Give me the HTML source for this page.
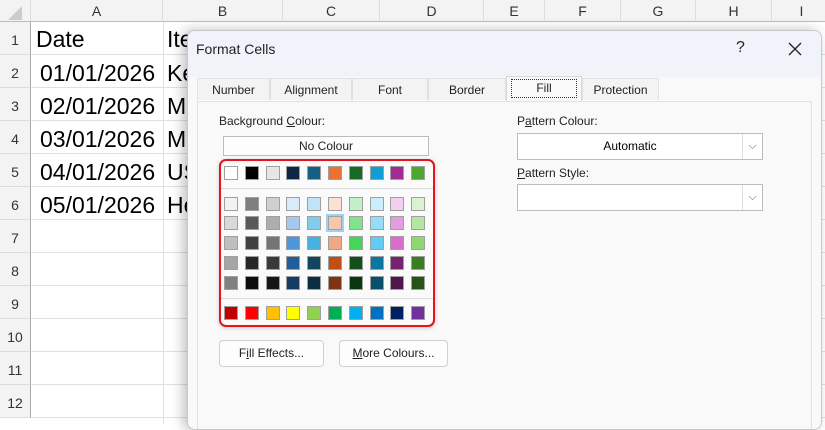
<!DOCTYPE html><html><head><style>
*{margin:0;padding:0;box-sizing:border-box}
body{width:825px;height:424px;overflow:hidden;background:#fff;font-family:"Liberation Sans",sans-serif;position:relative}
.a{position:absolute}
.ch{top:0;height:22px;background:#f3f3f3;border-bottom:1px solid #bbb;font-size:14px;color:#333;text-align:center;line-height:22px;border-right:1px solid #dcdcdc}
.rh{left:0;width:31px;height:33px;background:#f3f3f3;border-right:1px solid #aaa;border-bottom:1px solid #dcdcdc;font-size:14px;color:#333;text-align:center;line-height:36px}
.cell{font-size:23px;color:#000;line-height:33px}
.hl{left:31px;width:794px;height:1px;background:#e0e0e0}
.vl{top:22px;width:1px;height:402px;background:#e0e0e0}
.dlg{left:187px;top:30px;width:635px;height:400px;background:#f9f9f9;border:1px solid #c8c8c8;border-radius:8px;box-shadow:-4px 0 12px rgba(0,0,0,.25);overflow:hidden}
.t{font-size:12px;color:#222}
.tab{top:78px;height:22px;border:1px solid #e0e0e0;border-bottom:none;background:#f3f3f3;font-size:12px;text-align:center;line-height:22px;color:#222}
.sw{position:absolute;width:14px;height:14px;border:1px solid #a0a0a0}
.btn{background:#fdfdfd;border:1px solid #d0d0d0;border-radius:4px;font-size:12px;text-align:center;color:#222}
</style></head><body>
<div class="a ch" style="left:0;width:31px;background:#f3f3f3"></div>
<div class="a" style="left:8px;top:6px;width:0;height:0;border-left:14px solid transparent;border-bottom:14px solid #ccc"></div>
<div class="a ch" style="left:31px;width:132px">A</div>
<div class="a ch" style="left:163px;width:120px">B</div>
<div class="a ch" style="left:283px;width:97px">C</div>
<div class="a ch" style="left:380px;width:104px">D</div>
<div class="a ch" style="left:484px;width:61px">E</div>
<div class="a ch" style="left:545px;width:76px">F</div>
<div class="a ch" style="left:621px;width:75px">G</div>
<div class="a ch" style="left:696px;width:76px">H</div>
<div class="a ch" style="left:772px;width:60px">I</div>
<div class="a rh" style="top:22px">1</div><div class="a rh" style="top:55px">2</div><div class="a rh" style="top:88px">3</div><div class="a rh" style="top:121px">4</div><div class="a rh" style="top:154px">5</div><div class="a rh" style="top:187px">6</div><div class="a rh" style="top:220px">7</div><div class="a rh" style="top:253px">8</div><div class="a rh" style="top:286px">9</div><div class="a rh" style="top:319px">10</div><div class="a rh" style="top:352px">11</div><div class="a rh" style="top:385px">12</div>
<div class="a hl" style="top:54px"></div><div class="a hl" style="top:87px"></div><div class="a hl" style="top:120px"></div><div class="a hl" style="top:153px"></div><div class="a hl" style="top:186px"></div><div class="a hl" style="top:219px"></div><div class="a hl" style="top:252px"></div><div class="a hl" style="top:285px"></div><div class="a hl" style="top:318px"></div><div class="a hl" style="top:351px"></div><div class="a hl" style="top:384px"></div><div class="a hl" style="top:417px"></div>
<div class="a vl" style="left:163px"></div>
<div class="a cell" style="left:36px;top:23px">Date</div>
<div class="a cell" style="left:40px;top:57px">01/01/2026</div>
<div class="a cell" style="left:40px;top:90px">02/01/2026</div>
<div class="a cell" style="left:40px;top:123px">03/01/2026</div>
<div class="a cell" style="left:40px;top:156px">04/01/2026</div>
<div class="a cell" style="left:40px;top:189px">05/01/2026</div>
<div class="a cell" style="left:167px;top:23px">Item</div>
<div class="a cell" style="left:167px;top:57px">Ke</div>
<div class="a cell" style="left:167px;top:90px">Mo</div>
<div class="a cell" style="left:167px;top:123px">Mo</div>
<div class="a cell" style="left:167px;top:156px">US</div>
<div class="a cell" style="left:167px;top:189px">He</div>

<div class="a dlg">
<div class="a" style="left:0;top:0;width:635px;height:46px;background:#f0f4fa"></div>
<div class="a" style="left:8px;top:10px;font-size:14px;color:#222">Format Cells</div>
<div class="a" style="left:548px;top:8px;font-size:16px;color:#222">?</div>
<svg class="a" style="left:600px;top:11px" width="14" height="14" viewBox="0 0 14 14"><path d="M1 1L13 13M13 1L1 13" stroke="#222" stroke-width="1.3" fill="none"/></svg>
<div class="a" style="left:9px;top:70px;width:615px;height:340px;background:#f9f9f9;border:1px solid #e2e2e2"></div>
</div>
<div class="a tab" style="left:197px;width:73px">Number</div>
<div class="a tab" style="left:270px;width:82px">Alignment</div>
<div class="a tab" style="left:352px;width:76px">Font</div>
<div class="a tab" style="left:428px;width:78px">Border</div>
<div class="a tab" style="left:506px;top:76px;height:25px;width:76px;background:#f9f9f9;border-color:#d8d8d8"><div style="margin:2px 4px 0;border:1px dotted #333;height:19px;line-height:17px">Fill</div></div>
<div class="a tab" style="left:582px;width:77px">Protection</div>

<div class="a t" style="left:219px;top:114px">Background <u>C</u>olour:</div>
<div class="a" style="left:223px;top:136px;width:206px;height:20px;border:1px solid #bcbcbc;background:#fdfdfd;font-size:12px;text-align:center;line-height:18px;color:#222">No Colour</div>
<div class="a" style="left:219px;top:159px;width:216px;height:168px;border:2px solid #e8141b;border-radius:7px;background:#fafafa;box-shadow:0 1px 4px rgba(0,0,0,.2)"></div>
<div class="a" style="left:221px;top:188px;width:212px;height:1px;background:#dadada"></div>
<div class="a" style="left:221px;top:298px;width:212px;height:1px;background:#dadada"></div>
<div id="pal"></div>

<div class="a t" style="left:517px;top:114px">P<u>a</u>ttern Colour:</div>
<div class="a" style="left:517px;top:133px;width:246px;height:27px;border:1px solid #bcbcbc;background:#fff;font-size:12px;line-height:25px;text-align:center;padding-right:20px">Automatic</div>
<div class="a" style="left:742px;top:134px;width:20px;height:25px;border-left:1px solid #ddd;text-align:center;color:#666;font-size:11px;line-height:24px">⌵</div>
<div class="a t" style="left:517px;top:166px"><u>P</u>attern Style:</div>
<div class="a" style="left:517px;top:184px;width:246px;height:27px;border:1px solid #bcbcbc;background:#fff"></div>
<div class="a" style="left:742px;top:185px;width:20px;height:25px;border-left:1px solid #ddd;text-align:center;color:#666;font-size:11px;line-height:24px">⌵</div>

<div class="a btn" style="left:219px;top:340px;width:105px;height:27px;line-height:25px">F<u>i</u>ll Effects...</div>
<div class="a btn" style="left:339px;top:340px;width:109px;height:27px;line-height:25px"><u>M</u>ore Colours...</div>

<script>
var rows=[[173,["#fff","#000","#e7e6e6","#0e2841","#156082","#e97132","#196b24","#0f9ed5","#a02b93","#4ea72e"]],
[204,["#f2f2f2","#7f7f7f","#d0d0d0","#dceaf7","#c0e4f5","#fbe2d5","#c1f0c7","#caeefb","#f2cfee","#daf2d0"]],
[223,["#d9d9d9","#595959","#aeaeae","#a6c8ed","#83cbeb","#f7c7ac","#83e28e","#95dcf7","#e49edd","#b5e6a2"]],
[243,["#bfbfbf","#404040","#757575","#4e95d9","#44b3e1","#f1a983","#47d459","#61cbf3","#d86dcd","#8ed873"]],
[263,["#a6a6a6","#262626","#3a3a3a","#215f9a","#0f4761","#c04f15","#124f1a","#0b76a0","#782170","#3b7d23"]],
[283,["#808080","#0d0d0d","#171717","#153d64","#0a2f40","#803510","#0c3511","#074f6a","#501549","#275317"]],
[313,["#c00000","#ff0000","#ffc000","#ffff00","#92d050","#00b050","#00b0f0","#0070c0","#002060","#7030a0"]]];
var h="";rows.forEach(function(r){r[1].forEach(function(c,i){var x=224+i*20.8;h+='<div class="sw" style="left:'+x+'px;top:'+(r[0]-7)+'px;background:'+c+(r[0]==223&&i==5?';outline:2px solid #9fd0f5':'')+'"></div>';});});
document.getElementById("pal").innerHTML=h;
</script>
</body></html>
